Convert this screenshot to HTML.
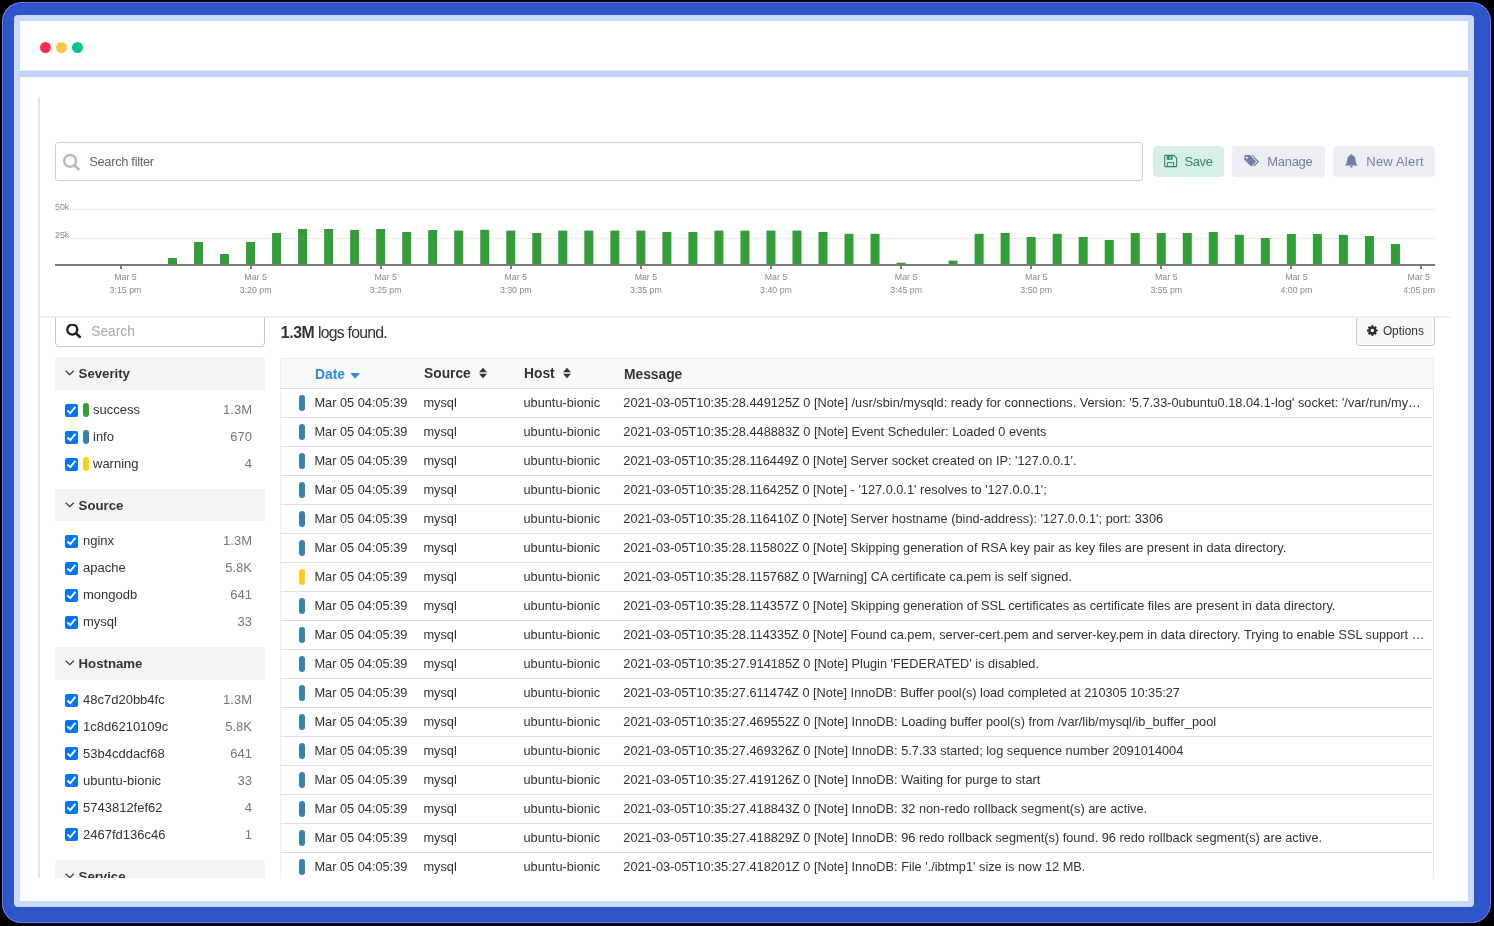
<!DOCTYPE html>
<html><head><meta charset="utf-8">
<style>
*{box-sizing:border-box;margin:0;padding:0}
html,body{width:1494px;height:926px;overflow:hidden;background:#000;font-family:"Liberation Sans",sans-serif;color:#333}
.abs{position:absolute}
#frame{position:absolute;left:2px;top:2px;width:1489px;height:921px;background:#2e56c9;border-radius:20px;box-shadow:inset 0 0 0 1px #7480cc,inset 0 0 0 2px #2846e2}
#inner{position:absolute;left:14px;top:15px;width:1460px;height:892px;background:#cad9f9;border-radius:4px}
#white{position:absolute;left:20px;top:21px;width:1448px;height:880px;background:#fff;overflow:hidden}
#sep{position:absolute;left:17px;top:71px;width:1454px;height:6px;background:#c2d2f6}
.dot{position:absolute;top:42px;width:11.4px;height:11.4px;border-radius:50%}
#vline{position:absolute;left:38px;top:97px;width:2px;height:781px;background:#e4e5ea;border-top-left-radius:3px}
#hline{position:absolute;left:40px;top:316px;width:1410px;height:2px;background:#eff0f3}
#sfilter{position:absolute;left:55px;top:142px;width:1088px;height:39px;border:1px solid #cfcfcf;border-radius:3px;background:#fff}
#sfilter .ic{position:absolute;left:7px;top:10px}
#sfilter .tx{position:absolute;left:33.2px;top:11px;font-size:12.9px;color:#666;letter-spacing:-0.32px}
.btn{position:absolute;top:146px;height:31px;border-radius:4px;font-size:13px}
.btn .ic{position:absolute;top:9px}
.btn .tx{position:absolute;top:8px;white-space:nowrap}
#bsave{left:1153px;width:71px;background:#d7efe5;color:#2f8a61}
#bman{left:1232px;width:93px;background:#eceef3;color:#6f7fa6}
#balert{left:1333px;width:102px;background:#eceef3;color:#6f7fa6}
/* sidebar */
#ssearch{position:absolute;left:55px;top:300px;width:210px;height:47px;border:1px solid #c9c9c9;border-radius:4px;background:#fff}
#ssearch .ic{position:absolute;left:10px;top:23px}
#ssearch .tx{position:absolute;left:35.2px;top:23px;font-size:13.8px;color:#a8a8a8}
#sidemask{position:absolute;left:40px;top:297px;width:240px;height:19px;background:#fff}
.sh{position:absolute;left:55px;width:210px;height:33px;background:#f4f4f4;border-radius:3px 3px 0 0}
.sh .chev{position:absolute;left:10.1px;top:13.2px;line-height:0}
.sh .sht{position:absolute;left:23.6px;top:9px;font-size:13.2px;font-weight:bold;color:#333}
.it{position:absolute;left:55px;width:210px;height:20px}
.it .cb{position:absolute;left:10px;top:3.5px;line-height:0}
.it .cbar{position:absolute;left:28px;top:3px;width:6px;height:14px;border-radius:3px}
.it .lb{position:absolute;left:28px;top:2px;font-size:13px;color:#333;white-space:nowrap}
.it .ct{position:absolute;right:13px;top:2px;font-size:13px;color:#777}
#clipbottom{position:absolute;left:20px;top:878px;width:1448px;height:23px;background:#fff}
/* main */
#found{position:absolute;left:280.8px;top:324px;font-size:15.8px;color:#333;white-space:nowrap;letter-spacing:-0.75px}
#found b{font-weight:bold;letter-spacing:-0.4px}
#opts{position:absolute;left:1355.7px;top:300px;width:79px;height:45.5px;border:1px solid #c6c6c6;border-radius:3px;background:#f8f8f6}
#opts .ic{position:absolute;left:9.6px;top:24.5px;line-height:0}
#opts .tx{position:absolute;left:26.2px;top:23px;font-size:11.9px;color:#333}
#thead{position:absolute;left:280px;top:358px;width:1154px;height:31px;background:#f8f9fa;border:1px solid #eceef1;border-bottom:1px solid #dcdcdc;border-radius:2px 2px 0 0}
#thead span{position:absolute;top:7.2px;font-size:13.8px;font-weight:bold;color:#333;white-space:nowrap}
#tbody{position:absolute;left:280px;top:389px;width:1154px;height:489px;border-left:1px solid #eceef1;border-right:1px solid #e6e7ea;overflow:hidden}
.row{position:absolute;left:-1px;width:1154px;height:29px;border-bottom:1px solid #dedede}
.row span{position:absolute;top:6px;font-size:12.75px;color:#333;white-space:nowrap}
.row .st{top:6px;left:19px;width:6px;height:16px;border-radius:3px}
.row .c1{left:34.5px}
.row .c2{left:143.5px}
.row .c3{left:243.5px}
.row .c4{left:343.3px;width:803px;overflow:hidden;text-overflow:ellipsis}
</style></head><body>
<div id="root" style="position:absolute;left:0;top:0;width:1494px;height:926px;will-change:transform">
<div id="frame"></div>
<div id="inner"></div>
<div id="white"></div>
<div id="sep"></div>
<div style="position:absolute;left:17px;top:70px;width:1454px;height:1px;background:#e2e9fb"></div>
<div class="dot" style="left:40px;background:#fe2c59"></div>
<div class="dot" style="left:56px;background:#ffc542"></div>
<div class="dot" style="left:72px;background:#00c597"></div>
<div id="vline"></div>
<div id="sfilter"><span class="ic"><svg width="20" height="20" viewBox="0 0 20 20"><circle cx="7.1" cy="7.9" r="5.9" stroke="#b5bcc2" stroke-width="2.5" fill="none"/><path d="M11.4 12.2 L16.2 17" stroke="#b5bcc2" stroke-width="2.7" stroke-linecap="butt"/></svg></span><span class="tx">Search filter</span></div>
<div class="btn" id="bsave"><span class="tx" style="left:31.5px;letter-spacing:-0.4px">Save</span></div>
<div class="btn" id="bman"><span class="tx" style="left:35.3px;letter-spacing:-0.3px">Manage</span></div>
<div class="btn" id="balert"><span class="tx" style="left:33.3px;letter-spacing:0.2px">New Alert</span></div>
<svg class="abs" style="left:0;top:0" width="1494" height="926" viewBox="0 0 1494 926">
<line x1="69" y1="209.5" x2="1435" y2="209.5" stroke="#ececec" stroke-width="1"/>
<line x1="69" y1="238.5" x2="1435" y2="238.5" stroke="#ececec" stroke-width="1"/>
<text x="55" y="210" font-size="8.8" fill="#8a8a8a" font-family="Liberation Sans">50k</text>
<text x="55" y="237.7" font-size="8.8" fill="#8a8a8a" font-family="Liberation Sans">25k</text>
<rect x="168.00" y="258.0" width="9" height="6.0" fill="#339d3a"/>
<rect x="194.02" y="242.0" width="9" height="22.0" fill="#339d3a"/>
<rect x="220.04" y="254.0" width="9" height="10.0" fill="#339d3a"/>
<rect x="246.06" y="242.0" width="9" height="22.0" fill="#339d3a"/>
<rect x="272.08" y="233.0" width="9" height="31.0" fill="#339d3a"/>
<rect x="298.10" y="229.0" width="9" height="35.0" fill="#339d3a"/>
<rect x="324.12" y="229.0" width="9" height="35.0" fill="#339d3a"/>
<rect x="350.14" y="230.0" width="9" height="34.0" fill="#339d3a"/>
<rect x="376.16" y="229.0" width="9" height="35.0" fill="#339d3a"/>
<rect x="402.18" y="232.0" width="9" height="32.0" fill="#339d3a"/>
<rect x="428.20" y="230.0" width="9" height="34.0" fill="#339d3a"/>
<rect x="454.22" y="230.6" width="9" height="33.4" fill="#339d3a"/>
<rect x="480.24" y="229.8" width="9" height="34.2" fill="#339d3a"/>
<rect x="506.26" y="230.6" width="9" height="33.4" fill="#339d3a"/>
<rect x="532.28" y="233.0" width="9" height="31.0" fill="#339d3a"/>
<rect x="558.30" y="230.6" width="9" height="33.4" fill="#339d3a"/>
<rect x="584.32" y="230.6" width="9" height="33.4" fill="#339d3a"/>
<rect x="610.34" y="230.6" width="9" height="33.4" fill="#339d3a"/>
<rect x="636.36" y="230.6" width="9" height="33.4" fill="#339d3a"/>
<rect x="662.38" y="232.0" width="9" height="32.0" fill="#339d3a"/>
<rect x="688.40" y="232.0" width="9" height="32.0" fill="#339d3a"/>
<rect x="714.42" y="230.6" width="9" height="33.4" fill="#339d3a"/>
<rect x="740.44" y="230.6" width="9" height="33.4" fill="#339d3a"/>
<rect x="766.46" y="230.6" width="9" height="33.4" fill="#339d3a"/>
<rect x="792.48" y="230.6" width="9" height="33.4" fill="#339d3a"/>
<rect x="818.50" y="232.0" width="9" height="32.0" fill="#339d3a"/>
<rect x="844.52" y="233.8" width="9" height="30.2" fill="#339d3a"/>
<rect x="870.54" y="233.8" width="9" height="30.2" fill="#339d3a"/>
<rect x="896.56" y="262.7" width="9" height="1.3" fill="#339d3a"/>
<rect x="948.60" y="260.6" width="9" height="3.4" fill="#339d3a"/>
<rect x="974.62" y="233.8" width="9" height="30.2" fill="#339d3a"/>
<rect x="1000.64" y="233.0" width="9" height="31.0" fill="#339d3a"/>
<rect x="1026.66" y="237.0" width="9" height="27.0" fill="#339d3a"/>
<rect x="1052.68" y="233.8" width="9" height="30.2" fill="#339d3a"/>
<rect x="1078.70" y="237.0" width="9" height="27.0" fill="#339d3a"/>
<rect x="1104.72" y="240.0" width="9" height="24.0" fill="#339d3a"/>
<rect x="1130.74" y="233.0" width="9" height="31.0" fill="#339d3a"/>
<rect x="1156.76" y="233.0" width="9" height="31.0" fill="#339d3a"/>
<rect x="1182.78" y="233.0" width="9" height="31.0" fill="#339d3a"/>
<rect x="1208.80" y="232.0" width="9" height="32.0" fill="#339d3a"/>
<rect x="1234.82" y="234.8" width="9" height="29.2" fill="#339d3a"/>
<rect x="1260.84" y="238.0" width="9" height="26.0" fill="#339d3a"/>
<rect x="1286.86" y="234.0" width="9" height="30.0" fill="#339d3a"/>
<rect x="1312.88" y="234.0" width="9" height="30.0" fill="#339d3a"/>
<rect x="1338.90" y="234.8" width="9" height="29.2" fill="#339d3a"/>
<rect x="1364.92" y="236.0" width="9" height="28.0" fill="#339d3a"/>
<rect x="1390.94" y="244.0" width="9" height="20.0" fill="#339d3a"/>
<rect x="55" y="264" width="1380" height="2" fill="#7b7b7b"/>
<rect x="120" y="266" width="2" height="3" fill="#7b7b7b"/>
<text x="125.5" y="280" font-size="8.8" fill="#8a8a8a" text-anchor="middle" font-family="Liberation Sans">Mar 5</text>
<text x="125.5" y="293" font-size="8.8" fill="#8a8a8a" text-anchor="middle" font-family="Liberation Sans">3:15 pm</text>
<rect x="250" y="266" width="2" height="3" fill="#7b7b7b"/>
<text x="255.6" y="280" font-size="8.8" fill="#8a8a8a" text-anchor="middle" font-family="Liberation Sans">Mar 5</text>
<text x="255.6" y="293" font-size="8.8" fill="#8a8a8a" text-anchor="middle" font-family="Liberation Sans">3:20 pm</text>
<rect x="380" y="266" width="2" height="3" fill="#7b7b7b"/>
<text x="385.7" y="280" font-size="8.8" fill="#8a8a8a" text-anchor="middle" font-family="Liberation Sans">Mar 5</text>
<text x="385.7" y="293" font-size="8.8" fill="#8a8a8a" text-anchor="middle" font-family="Liberation Sans">3:25 pm</text>
<rect x="510" y="266" width="2" height="3" fill="#7b7b7b"/>
<text x="515.8" y="280" font-size="8.8" fill="#8a8a8a" text-anchor="middle" font-family="Liberation Sans">Mar 5</text>
<text x="515.8" y="293" font-size="8.8" fill="#8a8a8a" text-anchor="middle" font-family="Liberation Sans">3:30 pm</text>
<rect x="640" y="266" width="2" height="3" fill="#7b7b7b"/>
<text x="645.9" y="280" font-size="8.8" fill="#8a8a8a" text-anchor="middle" font-family="Liberation Sans">Mar 5</text>
<text x="645.9" y="293" font-size="8.8" fill="#8a8a8a" text-anchor="middle" font-family="Liberation Sans">3:35 pm</text>
<rect x="770" y="266" width="2" height="3" fill="#7b7b7b"/>
<text x="776.0" y="280" font-size="8.8" fill="#8a8a8a" text-anchor="middle" font-family="Liberation Sans">Mar 5</text>
<text x="776.0" y="293" font-size="8.8" fill="#8a8a8a" text-anchor="middle" font-family="Liberation Sans">3:40 pm</text>
<rect x="900" y="266" width="2" height="3" fill="#7b7b7b"/>
<text x="906.1" y="280" font-size="8.8" fill="#8a8a8a" text-anchor="middle" font-family="Liberation Sans">Mar 5</text>
<text x="906.1" y="293" font-size="8.8" fill="#8a8a8a" text-anchor="middle" font-family="Liberation Sans">3:45 pm</text>
<rect x="1030" y="266" width="2" height="3" fill="#7b7b7b"/>
<text x="1036.2" y="280" font-size="8.8" fill="#8a8a8a" text-anchor="middle" font-family="Liberation Sans">Mar 5</text>
<text x="1036.2" y="293" font-size="8.8" fill="#8a8a8a" text-anchor="middle" font-family="Liberation Sans">3:50 pm</text>
<rect x="1160" y="266" width="2" height="3" fill="#7b7b7b"/>
<text x="1166.3" y="280" font-size="8.8" fill="#8a8a8a" text-anchor="middle" font-family="Liberation Sans">Mar 5</text>
<text x="1166.3" y="293" font-size="8.8" fill="#8a8a8a" text-anchor="middle" font-family="Liberation Sans">3:55 pm</text>
<rect x="1290" y="266" width="2" height="3" fill="#7b7b7b"/>
<text x="1296.4" y="280" font-size="8.8" fill="#8a8a8a" text-anchor="middle" font-family="Liberation Sans">Mar 5</text>
<text x="1296.4" y="293" font-size="8.8" fill="#8a8a8a" text-anchor="middle" font-family="Liberation Sans">4:00 pm</text>
<rect x="1420" y="266" width="2" height="3" fill="#7b7b7b"/>
<text x="1430" y="280" font-size="8.8" fill="#8a8a8a" text-anchor="end" font-family="Liberation Sans">Mar 5</text>
<text x="1435" y="293" font-size="8.8" fill="#8a8a8a" text-anchor="end" font-family="Liberation Sans">4:05 pm</text>
</svg>
<svg class="abs" style="left:1160px;top:150px" width="25" height="22" viewBox="1160 150 25 22"><path d="M1165.3 155.4 H1173.9 L1176.6 158.1 V165.9 Q1176.6 166.6 1175.9 166.6 H1165.3 Q1164.7 166.6 1164.7 165.9 V156 Q1164.7 155.4 1165.3 155.4 Z" fill="none" stroke="#2f8a61" stroke-width="1.1"/><path fill-rule="evenodd" d="M1166.9 155 H1172.6 V159.7 H1166.9 Z M1169.6 156.2 V158.5 H1170.9 V156.2 Z" fill="#2f8a61"/><path d="M1167.4 166.3 V162.6 H1173.7 V166.3" fill="none" stroke="#2f8a61" stroke-width="1"/></svg>
<svg class="abs" style="left:1240px;top:150px" width="24" height="22" viewBox="1240 150 24 22"><path fill-rule="evenodd" d="M1244.7 155 H1250.2 L1256.1 161.6 L1251.3 166.6 L1244.3 159.7 Z M1246.8 156.5 A1.1 1.1 0 1 0 1246.81 156.5 Z" fill="#6f7fa6"/><path d="M1251.6 155.1 H1252.8 L1259 161.7 L1254.3 166.6 L1253.3 165.6 L1257.3 161.7 Z" fill="#6f7fa6"/></svg>
<svg class="abs" style="left:1340px;top:150px" width="24" height="22" viewBox="1340 150 24 22"><path d="M1351.4 153.9 C1351.9 153.9 1352.1 154.5 1352.1 154.9 C1354.3 155.5 1355.3 157.3 1355.5 159.5 C1355.7 162.3 1356.1 163.8 1357.8 165.6 H1344.9 C1346.6 163.8 1347.0 162.3 1347.2 159.5 C1347.4 157.3 1348.4 155.5 1350.7 154.9 C1350.7 154.5 1350.9 153.9 1351.4 153.9 Z M1350.2 166 H1352.8 C1352.8 167.1 1352.2 167.7 1351.5 167.7 C1350.8 167.7 1350.2 167.1 1350.2 166 Z" fill="#6f7fa6"/></svg>
<div id="ssearch"><span class="ic"><svg width="17" height="17" viewBox="0 0 17 17"><circle cx="6.3" cy="5.6" r="5.0" stroke="#222" stroke-width="2.4" fill="none"/><path d="M10 9.3 L13.9 13" stroke="#222" stroke-width="2.5" stroke-linecap="round"/></svg></span><span class="tx">Search</span></div>
<div id="opts"><span class="tx">Options</span></div>
<div id="sidemask"></div>
<svg class="abs" style="left:1362px;top:320px" width="20" height="20" viewBox="1362 320 20 20"><g transform="translate(1372.35 330.55)" fill="#2b2b2b"><circle r="3.95"/><rect x="-1.05" y="-5.35" width="2.1" height="2.4" transform="rotate(0)"/><rect x="-1.05" y="-5.35" width="2.1" height="2.4" transform="rotate(45)"/><rect x="-1.05" y="-5.35" width="2.1" height="2.4" transform="rotate(90)"/><rect x="-1.05" y="-5.35" width="2.1" height="2.4" transform="rotate(135)"/><rect x="-1.05" y="-5.35" width="2.1" height="2.4" transform="rotate(180)"/><rect x="-1.05" y="-5.35" width="2.1" height="2.4" transform="rotate(225)"/><rect x="-1.05" y="-5.35" width="2.1" height="2.4" transform="rotate(270)"/><rect x="-1.05" y="-5.35" width="2.1" height="2.4" transform="rotate(315)"/><circle r="1.75" fill="#f8f8f6"/></g></svg>
<div id="sidemask2" style="position:absolute;left:1300px;top:297px;width:160px;height:19px;background:#fff"></div>
<div id="hline"></div>
<div class="sh" style="top:357px;height:33px"><span class="chev"><svg width="10" height="6" viewBox="0 0 10 6"><path d="M0.7 0.8 L4.75 4.7 L8.8 0.8" stroke="#3a3a3a" stroke-width="1.2" fill="none"/></svg></span><span class="sht">Severity</span></div>
<div class="it" style="top:400px"><span class="cb"><svg width="13" height="13" viewBox="0 0 13 13"><rect x="0" y="0" width="13" height="13" rx="2" fill="#0075ff"/><path d="M2.4 6.5 L5.3 9.2 L10.4 2.9" stroke="#fff" stroke-width="1.9" fill="none"/></svg></span><span class="cbar" style="background:#339d3a"></span><span class="lb" style="left:38px">success</span><span class="ct">1.3M</span></div>
<div class="it" style="top:427px"><span class="cb"><svg width="13" height="13" viewBox="0 0 13 13"><rect x="0" y="0" width="13" height="13" rx="2" fill="#0075ff"/><path d="M2.4 6.5 L5.3 9.2 L10.4 2.9" stroke="#fff" stroke-width="1.9" fill="none"/></svg></span><span class="cbar" style="background:#3683a9"></span><span class="lb" style="left:38px">info</span><span class="ct">670</span></div>
<div class="it" style="top:454px"><span class="cb"><svg width="13" height="13" viewBox="0 0 13 13"><rect x="0" y="0" width="13" height="13" rx="2" fill="#0075ff"/><path d="M2.4 6.5 L5.3 9.2 L10.4 2.9" stroke="#fff" stroke-width="1.9" fill="none"/></svg></span><span class="cbar" style="background:#fdd017"></span><span class="lb" style="left:38px">warning</span><span class="ct">4</span></div>
<div class="sh" style="top:489px;height:32px"><span class="chev"><svg width="10" height="6" viewBox="0 0 10 6"><path d="M0.7 0.8 L4.75 4.7 L8.8 0.8" stroke="#3a3a3a" stroke-width="1.2" fill="none"/></svg></span><span class="sht">Source</span></div>
<div class="it" style="top:531px"><span class="cb"><svg width="13" height="13" viewBox="0 0 13 13"><rect x="0" y="0" width="13" height="13" rx="2" fill="#0075ff"/><path d="M2.4 6.5 L5.3 9.2 L10.4 2.9" stroke="#fff" stroke-width="1.9" fill="none"/></svg></span><span class="lb">nginx</span><span class="ct">1.3M</span></div>
<div class="it" style="top:558px"><span class="cb"><svg width="13" height="13" viewBox="0 0 13 13"><rect x="0" y="0" width="13" height="13" rx="2" fill="#0075ff"/><path d="M2.4 6.5 L5.3 9.2 L10.4 2.9" stroke="#fff" stroke-width="1.9" fill="none"/></svg></span><span class="lb">apache</span><span class="ct">5.8K</span></div>
<div class="it" style="top:585px"><span class="cb"><svg width="13" height="13" viewBox="0 0 13 13"><rect x="0" y="0" width="13" height="13" rx="2" fill="#0075ff"/><path d="M2.4 6.5 L5.3 9.2 L10.4 2.9" stroke="#fff" stroke-width="1.9" fill="none"/></svg></span><span class="lb">mongodb</span><span class="ct">641</span></div>
<div class="it" style="top:612px"><span class="cb"><svg width="13" height="13" viewBox="0 0 13 13"><rect x="0" y="0" width="13" height="13" rx="2" fill="#0075ff"/><path d="M2.4 6.5 L5.3 9.2 L10.4 2.9" stroke="#fff" stroke-width="1.9" fill="none"/></svg></span><span class="lb">mysql</span><span class="ct">33</span></div>
<div class="sh" style="top:647px;height:33px"><span class="chev"><svg width="10" height="6" viewBox="0 0 10 6"><path d="M0.7 0.8 L4.75 4.7 L8.8 0.8" stroke="#3a3a3a" stroke-width="1.2" fill="none"/></svg></span><span class="sht">Hostname</span></div>
<div class="it" style="top:690.0px"><span class="cb"><svg width="13" height="13" viewBox="0 0 13 13"><rect x="0" y="0" width="13" height="13" rx="2" fill="#0075ff"/><path d="M2.4 6.5 L5.3 9.2 L10.4 2.9" stroke="#fff" stroke-width="1.9" fill="none"/></svg></span><span class="lb">48c7d20bb4fc</span><span class="ct">1.3M</span></div>
<div class="it" style="top:716.9px"><span class="cb"><svg width="13" height="13" viewBox="0 0 13 13"><rect x="0" y="0" width="13" height="13" rx="2" fill="#0075ff"/><path d="M2.4 6.5 L5.3 9.2 L10.4 2.9" stroke="#fff" stroke-width="1.9" fill="none"/></svg></span><span class="lb">1c8d6210109c</span><span class="ct">5.8K</span></div>
<div class="it" style="top:743.8px"><span class="cb"><svg width="13" height="13" viewBox="0 0 13 13"><rect x="0" y="0" width="13" height="13" rx="2" fill="#0075ff"/><path d="M2.4 6.5 L5.3 9.2 L10.4 2.9" stroke="#fff" stroke-width="1.9" fill="none"/></svg></span><span class="lb">53b4cddacf68</span><span class="ct">641</span></div>
<div class="it" style="top:770.7px"><span class="cb"><svg width="13" height="13" viewBox="0 0 13 13"><rect x="0" y="0" width="13" height="13" rx="2" fill="#0075ff"/><path d="M2.4 6.5 L5.3 9.2 L10.4 2.9" stroke="#fff" stroke-width="1.9" fill="none"/></svg></span><span class="lb">ubuntu-bionic</span><span class="ct">33</span></div>
<div class="it" style="top:797.6px"><span class="cb"><svg width="13" height="13" viewBox="0 0 13 13"><rect x="0" y="0" width="13" height="13" rx="2" fill="#0075ff"/><path d="M2.4 6.5 L5.3 9.2 L10.4 2.9" stroke="#fff" stroke-width="1.9" fill="none"/></svg></span><span class="lb">5743812fef62</span><span class="ct">4</span></div>
<div class="it" style="top:824.5px"><span class="cb"><svg width="13" height="13" viewBox="0 0 13 13"><rect x="0" y="0" width="13" height="13" rx="2" fill="#0075ff"/><path d="M2.4 6.5 L5.3 9.2 L10.4 2.9" stroke="#fff" stroke-width="1.9" fill="none"/></svg></span><span class="lb">2467fd136c46</span><span class="ct">1</span></div>
<div class="sh" style="top:860px;height:33px"><span class="chev"><svg width="10" height="6" viewBox="0 0 10 6"><path d="M0.7 0.8 L4.75 4.7 L8.8 0.8" stroke="#3a3a3a" stroke-width="1.2" fill="none"/></svg></span><span class="sht">Service</span></div>
<div id="found"><b>1.3M</b> logs found.</div>
<div id="thead"><span style="left:34px;top:7.6px;color:#2f8be6">Date</span><span style="left:68.8px;top:13.5px;line-height:0"><svg width="11" height="6" viewBox="0 0 11 6"><path d="M0.3 0 L10 0 L5.15 5.8 Z" fill="#2f8be6"/></svg></span><span style="left:143px">Source</span><span style="left:198px;top:8.1px;line-height:0"><svg width="8" height="12" viewBox="0 0 8 12"><path d="M0 5.2 L4 0.8 L8 5.2 Z M0 6.8 L4 11.2 L8 6.8 Z" fill="#333"/></svg></span><span style="left:243px">Host</span><span style="left:282px;top:8.1px;line-height:0"><svg width="8" height="12" viewBox="0 0 8 12"><path d="M0 5.2 L4 0.8 L8 5.2 Z M0 6.8 L4 11.2 L8 6.8 Z" fill="#333"/></svg></span><span style="left:343px;top:8.1px">Message</span></div>
<div id="tbody">
<div class="row" style="top:0px"><span class="st" style="background:#3683a9"></span><span class="c1">Mar 05 04:05:39</span><span class="c2">mysql</span><span class="c3">ubuntu-bionic</span><span class="c4">2021-03-05T10:35:28.449125Z 0 [Note] /usr/sbin/mysqld: ready for connections. Version: '5.7.33-0ubuntu0.18.04.1-log' socket: '/var/run/mysqld/mysqld.sock' port: 3306 (Ubuntu)</span></div>
<div class="row" style="top:29px"><span class="st" style="background:#3683a9"></span><span class="c1">Mar 05 04:05:39</span><span class="c2">mysql</span><span class="c3">ubuntu-bionic</span><span class="c4">2021-03-05T10:35:28.448883Z 0 [Note] Event Scheduler: Loaded 0 events</span></div>
<div class="row" style="top:58px"><span class="st" style="background:#3683a9"></span><span class="c1">Mar 05 04:05:39</span><span class="c2">mysql</span><span class="c3">ubuntu-bionic</span><span class="c4">2021-03-05T10:35:28.116449Z 0 [Note] Server socket created on IP: '127.0.0.1'.</span></div>
<div class="row" style="top:87px"><span class="st" style="background:#3683a9"></span><span class="c1">Mar 05 04:05:39</span><span class="c2">mysql</span><span class="c3">ubuntu-bionic</span><span class="c4">2021-03-05T10:35:28.116425Z 0 [Note] - '127.0.0.1' resolves to '127.0.0.1';</span></div>
<div class="row" style="top:116px"><span class="st" style="background:#3683a9"></span><span class="c1">Mar 05 04:05:39</span><span class="c2">mysql</span><span class="c3">ubuntu-bionic</span><span class="c4">2021-03-05T10:35:28.116410Z 0 [Note] Server hostname (bind-address): '127.0.0.1'; port: 3306</span></div>
<div class="row" style="top:145px"><span class="st" style="background:#3683a9"></span><span class="c1">Mar 05 04:05:39</span><span class="c2">mysql</span><span class="c3">ubuntu-bionic</span><span class="c4">2021-03-05T10:35:28.115802Z 0 [Note] Skipping generation of RSA key pair as key files are present in data directory.</span></div>
<div class="row" style="top:174px"><span class="st" style="background:#fdd017"></span><span class="c1">Mar 05 04:05:39</span><span class="c2">mysql</span><span class="c3">ubuntu-bionic</span><span class="c4">2021-03-05T10:35:28.115768Z 0 [Warning] CA certificate ca.pem is self signed.</span></div>
<div class="row" style="top:203px"><span class="st" style="background:#3683a9"></span><span class="c1">Mar 05 04:05:39</span><span class="c2">mysql</span><span class="c3">ubuntu-bionic</span><span class="c4">2021-03-05T10:35:28.114357Z 0 [Note] Skipping generation of SSL certificates as certificate files are present in data directory.</span></div>
<div class="row" style="top:232px"><span class="st" style="background:#3683a9"></span><span class="c1">Mar 05 04:05:39</span><span class="c2">mysql</span><span class="c3">ubuntu-bionic</span><span class="c4">2021-03-05T10:35:28.114335Z 0 [Note] Found ca.pem, server-cert.pem and server-key.pem in data directory. Trying to enable SSL support using them.</span></div>
<div class="row" style="top:261px"><span class="st" style="background:#3683a9"></span><span class="c1">Mar 05 04:05:39</span><span class="c2">mysql</span><span class="c3">ubuntu-bionic</span><span class="c4">2021-03-05T10:35:27.914185Z 0 [Note] Plugin 'FEDERATED' is disabled.</span></div>
<div class="row" style="top:290px"><span class="st" style="background:#3683a9"></span><span class="c1">Mar 05 04:05:39</span><span class="c2">mysql</span><span class="c3">ubuntu-bionic</span><span class="c4">2021-03-05T10:35:27.611474Z 0 [Note] InnoDB: Buffer pool(s) load completed at 210305 10:35:27</span></div>
<div class="row" style="top:319px"><span class="st" style="background:#3683a9"></span><span class="c1">Mar 05 04:05:39</span><span class="c2">mysql</span><span class="c3">ubuntu-bionic</span><span class="c4">2021-03-05T10:35:27.469552Z 0 [Note] InnoDB: Loading buffer pool(s) from /var/lib/mysql/ib_buffer_pool</span></div>
<div class="row" style="top:348px"><span class="st" style="background:#3683a9"></span><span class="c1">Mar 05 04:05:39</span><span class="c2">mysql</span><span class="c3">ubuntu-bionic</span><span class="c4">2021-03-05T10:35:27.469326Z 0 [Note] InnoDB: 5.7.33 started; log sequence number 2091014004</span></div>
<div class="row" style="top:377px"><span class="st" style="background:#3683a9"></span><span class="c1">Mar 05 04:05:39</span><span class="c2">mysql</span><span class="c3">ubuntu-bionic</span><span class="c4">2021-03-05T10:35:27.419126Z 0 [Note] InnoDB: Waiting for purge to start</span></div>
<div class="row" style="top:406px"><span class="st" style="background:#3683a9"></span><span class="c1">Mar 05 04:05:39</span><span class="c2">mysql</span><span class="c3">ubuntu-bionic</span><span class="c4">2021-03-05T10:35:27.418843Z 0 [Note] InnoDB: 32 non-redo rollback segment(s) are active.</span></div>
<div class="row" style="top:435px"><span class="st" style="background:#3683a9"></span><span class="c1">Mar 05 04:05:39</span><span class="c2">mysql</span><span class="c3">ubuntu-bionic</span><span class="c4">2021-03-05T10:35:27.418829Z 0 [Note] InnoDB: 96 redo rollback segment(s) found. 96 redo rollback segment(s) are active.</span></div>
<div class="row" style="top:464px"><span class="st" style="background:#3683a9"></span><span class="c1">Mar 05 04:05:39</span><span class="c2">mysql</span><span class="c3">ubuntu-bionic</span><span class="c4">2021-03-05T10:35:27.418201Z 0 [Note] InnoDB: File './ibtmp1' size is now 12 MB.</span></div>
</div>
<div id="clipbottom"></div>
</div>
</body></html>
